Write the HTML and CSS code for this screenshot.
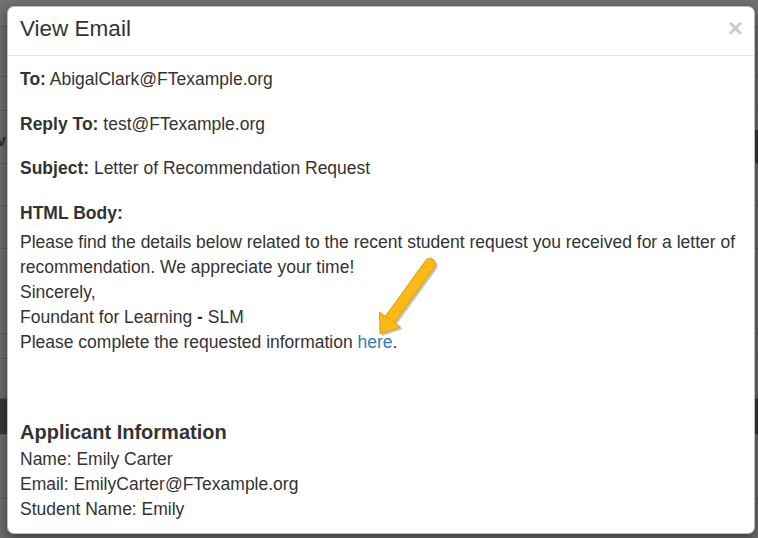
FILE: index.html
```html
<!DOCTYPE html>
<html lang="en">
<head>
<meta charset="utf-8">
<title>View Email</title>
<link rel="stylesheet" href="styles.css">
</head>
<body>
<div class="page">
  <div class="row r1"></div>
  <div class="row r2"></div>
  <div class="row r3"></div>
  <div class="row r4"></div>
  <div class="row r5"><div class="cell"><span class="glyph">v</span></div><div class="cell dark"></div></div>
  <div class="row r6"></div>
  <div class="row r7"></div>
  <div class="row r8"></div>
  <div class="row r9"></div>
  <div class="row r10"></div>
  <div class="row r11 dark"></div>
  <div class="row r12"></div>
  <div class="row r13"></div>
</div>

<div class="modal">
  <div class="modal-header">
    <h4 class="modal-title">View Email</h4>
    <button class="close" type="button">&times;</button>
  </div>
  <div class="modal-body">
    <div class="field"><strong>To:</strong> AbigalClark@FTexample.org</div>
    <div class="field"><strong>Reply To:</strong> test@FTexample.org</div>
    <div class="field"><strong>Subject:</strong> Letter of Recommendation Request</div>
    <div class="field-label"><strong>HTML Body:</strong></div>
    <div class="email-body">
      Please find the details below related to the recent student request you received for a letter of recommendation. We appreciate your time!<br>
      Sincerely,<br>
      Foundant for Learning <strong>-</strong> SLM<br>
      Please complete the requested information <a href="#">here</a>.
    </div>
    <div class="applicant">
      <div class="applicant-title">Applicant Information</div>
      <div>Name: Emily Carter</div>
      <div>Email: EmilyCarter@FTexample.org</div>
      <div>Student Name: Emily</div>
    </div>
  </div>
</div>

<svg class="arrow" width="758" height="538" viewBox="0 0 758 538" xmlns="http://www.w3.org/2000/svg">
  <g opacity="0.35" transform="translate(2,2)">
    <line x1="430" y1="264" x2="391" y2="318" stroke="#555" stroke-width="11" stroke-linecap="round"/>
    <polygon points="379.5,312 400.5,327 380,334" fill="#555"/>
  </g>
  <line x1="430" y1="264" x2="391" y2="318" stroke="#e3a20b" stroke-width="12" stroke-linecap="round"/>
  <line x1="430" y1="264" x2="391" y2="318" stroke="#fab914" stroke-width="10" stroke-linecap="round"/>
  <polygon points="379.5,312 400.5,327 380,334" fill="#fab914" stroke="#e3a20b" stroke-width="1" stroke-linejoin="round"/>
</svg>
</body>
</html>
```

FILE: styles.css
```css
html, body {
  margin: 0;
  padding: 0;
}

body {
  width: 758px;
  height: 538px;
  overflow: hidden;
  position: relative;
  background: #6c6c6c;
  font-family: "Liberation Sans", Arial, sans-serif;
  color: #333;
}

/* dimmed page behind the modal */
.page {
  display: flex;
  flex-direction: column;
  height: 538px;
}

.row {
  border-bottom: 1px solid #5b5b5b;
  display: flex;
}

.r1 { height: 26px; background: #707070; }
.r2 { height: 49px; }
.r3 { height: 33px; }
.r4 { height: 19px; border-bottom: none; }
.r5 { height: 33px; }
.r6 { height: 41px; }
.r7 { height: 42px; }
.r8 { height: 84px; }
.r9 { height: 24px; }
.r10 { height: 39px; }
.r11 { height: 35px; }
.r12 { height: 63px; }
.r13 { flex: 1; border-bottom: none; }

.cell {
  flex: 1;
  position: relative;
}

.dark {
  background: #383838;
}

.glyph {
  display: block;
  font-weight: bold;
  font-size: 16px;
  line-height: 16px;
  color: #1d3047;
  margin-left: -3px;
  margin-top: 3px;
}

/* modal */
.modal {
  position: absolute;
  left: 7px;
  top: 6px;
  width: 746px;
  height: 526px;
  background: #fff;
  border: 1px solid rgba(0, 0, 0, 0.25);
  border-radius: 7px;
  box-shadow: 0 4px 12px rgba(0, 0, 0, 0.45);
  overflow: hidden;
}

.modal-header {
  display: flex;
  justify-content: space-between;
  align-items: flex-start;
  padding: 6px 11px 10px 12px;
  border-bottom: 1px solid #e5e5e5;
}

.modal-title {
  margin: 0;
  font-size: 22.5px;
  line-height: 32px;
  font-weight: normal;
  color: #333;
}

.close {
  margin-top: 2px;
  padding: 0;
  border: 0;
  background: transparent;
  font-family: "Liberation Sans", Arial, sans-serif;
  font-size: 26px;
  line-height: 26px;
  font-weight: bold;
  color: #000;
  opacity: 0.2;
  cursor: pointer;
}

.modal-body {
  padding: 11px 12px 12px 12px;
  font-size: 17.5px;
  line-height: 25px;
}

.field {
  margin-bottom: 19.6px;
}

.field-label {
  margin-bottom: 4px;
}

.email-body a {
  color: #337ab7;
  text-decoration: none;
}

.applicant {
  margin-top: 63px;
}

.applicant-title {
  font-size: 20px;
  line-height: 29px;
  font-weight: bold;
}

.arrow {
  position: absolute;
  left: 0;
  top: 0;
  pointer-events: none;
}
```
